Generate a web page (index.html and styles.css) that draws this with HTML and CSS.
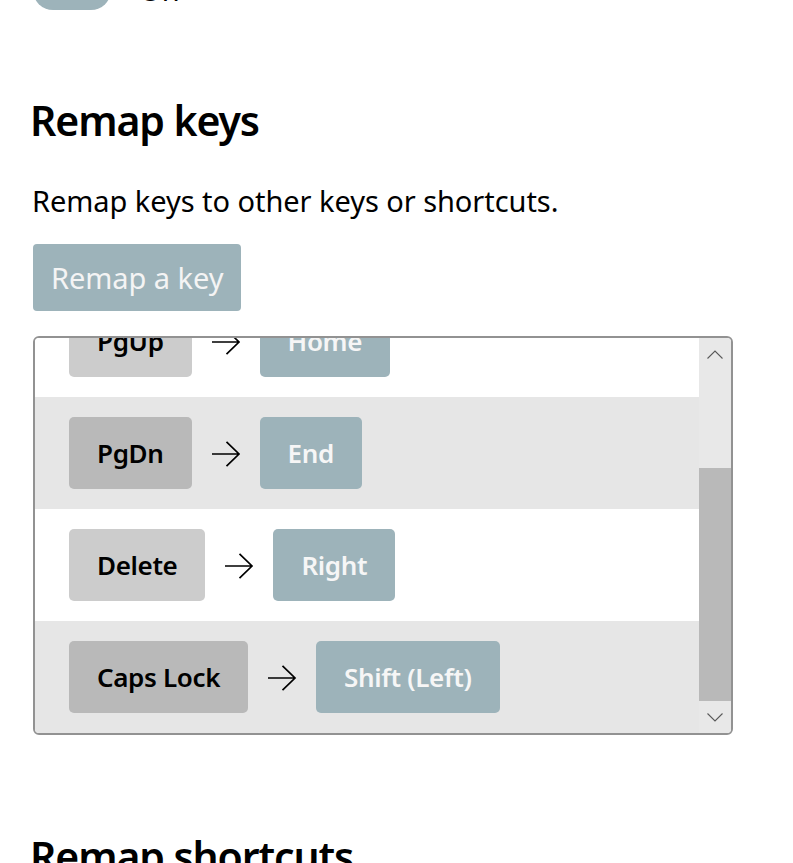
FILE: index.html
```html
<!DOCTYPE html>
<html lang="en">
<head>
<meta charset="utf-8">
<title>Keyboard Manager</title>
<link rel="stylesheet" href="styles.css">
</head>
<body>
<main class="page">
  <div class="toggle-row">
    <span class="toggle"></span>
    <span class="toggle-label">On</span>
  </div>

  <h2 class="section-title">Remap keys</h2>
  <p class="section-desc">Remap keys to other keys or shortcuts.</p>
  <button class="action-btn" type="button">Remap a key</button>

  <div class="listbox">
    <div class="rows">
      <div class="rows-inner">
        <div class="row">
          <span class="key src">PgUp</span>
          <svg class="arrow" viewBox="0 0 30 26" width="30" height="26"><path d="M1 13H28M15.5 0.8L28 13L15.5 25.2"/></svg>
          <span class="key dst">Home</span>
        </div>
        <div class="row alt">
          <span class="key src">PgDn</span>
          <svg class="arrow" viewBox="0 0 30 26" width="30" height="26"><path d="M1 13H28M15.5 0.8L28 13L15.5 25.2"/></svg>
          <span class="key dst">End</span>
        </div>
        <div class="row">
          <span class="key src">Delete</span>
          <svg class="arrow" viewBox="0 0 30 26" width="30" height="26"><path d="M1 13H28M15.5 0.8L28 13L15.5 25.2"/></svg>
          <span class="key dst">Right</span>
        </div>
        <div class="row alt">
          <span class="key src">Caps Lock</span>
          <svg class="arrow" viewBox="0 0 30 26" width="30" height="26"><path d="M1 13H28M15.5 0.8L28 13L15.5 25.2"/></svg>
          <span class="key dst">Shift (Left)</span>
        </div>
      </div>
    </div>
    <div class="scrollbar">
      <div class="sb-btn"><svg viewBox="0 0 16 9" width="16" height="9"><path d="M0.5 8.5L8 1L15.5 8.5"/></svg></div>
      <div class="sb-track">
        <div class="sb-thumb"></div>
      </div>
      <div class="sb-btn"><svg viewBox="0 0 16 9" width="16" height="9"><path d="M0.5 0.5L8 8L15.5 0.5"/></svg></div>
    </div>
  </div>

  <h2 class="section-title next">Remap shortcuts</h2>
</main>
</body>
</html>
```
FILE: styles.css
```css
html, body {
  margin: 0;
  padding: 0;
  background: #ffffff;
  overflow: hidden;
}

body {
  font-family: "Noto Sans", "Open Sans", "DejaVu Sans", sans-serif;
  color: #000000;
}

.page {
  padding-left: 33px;
  height: 863px;
  overflow: hidden;
}

.toggle-row {
  display: flex;
  align-items: center;
  gap: 28px;
  height: 40px;
  margin-top: -30px;
}

.toggle {
  display: block;
  width: 78px;
  height: 40px;
  border-radius: 20px;
  background: #9db3ba;
}

.toggle-label {
  font-size: 29px;
  line-height: 40px;
}

.section-title {
  margin: 80px 0 0 -3px;
  font-size: 41px;
  line-height: 60px;
  font-weight: 600;
  letter-spacing: -1.1px;
}

.section-title.next {
  margin-top: 91px;
}

.section-desc {
  margin: 31px 0 0 -1px;
  font-size: 29px;
  line-height: 40px;
  letter-spacing: -0.05px;
}

.action-btn {
  display: flex;
  align-items: center;
  margin: 23px 0 0 0;
  height: 67px;
  padding: 0 18px;
  border: 0;
  border-radius: 4px;
  background: #9db3ba;
  color: #f4f4f4;
  font-family: inherit;
  font-size: 29px;
  letter-spacing: -0.05px;
}

.listbox {
  display: flex;
  margin-top: 25px;
  width: 700px;
  height: 399px;
  box-sizing: border-box;
  border: 2px solid #929292;
  border-radius: 6px;
  overflow: hidden;
}

.rows {
  flex: 1;
  overflow: hidden;
}

.rows-inner {
  margin-top: -53px;
}

.row {
  display: flex;
  align-items: center;
  gap: 19px;
  height: 112px;
  padding-left: 34px;
  background: #ffffff;
}

.row.alt {
  background: #e6e6e6;
}

.key {
  display: flex;
  align-items: center;
  height: 72px;
  padding: 0 28px;
  border-radius: 5px;
  font-size: 26px;
  font-weight: 600;
  letter-spacing: -0.35px;
}

.key.src {
  background: #cccccc;
  color: #000000;
}

.row.alt .key.src {
  background: #b9b9b9;
}

.key.dst {
  background: #9db3ba;
  color: #f6f6f6;
}

.arrow {
  display: block;
  flex: none;
  margin-top: 2px;
}

.arrow path {
  fill: none;
  stroke: #000000;
  stroke-width: 1.7;
}

.scrollbar {
  display: flex;
  flex-direction: column;
  width: 32px;
  flex: none;
  background: #e8e8e8;
}

.sb-btn {
  display: flex;
  align-items: center;
  justify-content: center;
  height: 32px;
  flex: none;
}

.sb-btn svg path {
  fill: none;
  stroke: #5a5a5a;
  stroke-width: 1.1;
}

.sb-track {
  flex: 1;
  display: flex;
  flex-direction: column;
  justify-content: flex-end;
}

.sb-thumb {
  height: 233px;
  background: #b9b9b9;
}
```
